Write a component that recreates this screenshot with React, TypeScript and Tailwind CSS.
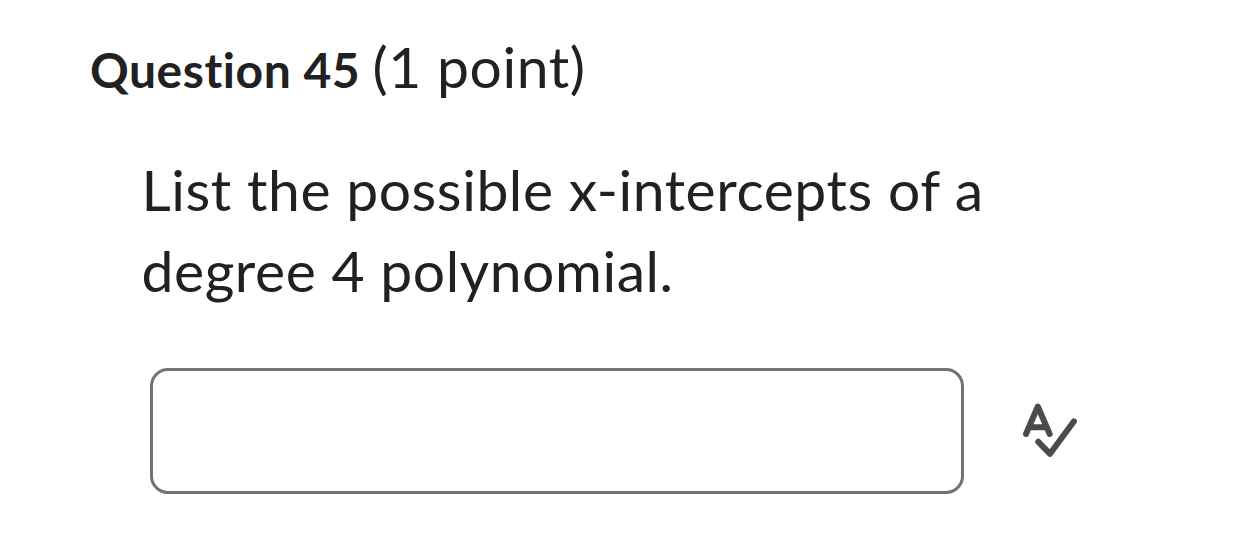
import { useState } from 'react'

function SpellCheckIcon() {
  return (
    <svg className="h-[56px] w-[56px] overflow-visible" viewBox="0 0 56 56" fill="none" stroke="#494c4e" strokeWidth={6} strokeLinecap="round" strokeLinejoin="round">
      <path d="M5 31L16.800 3.500L28.700 31M9 24.200H24.500" />
      <path d="M17.300 38.800L29 50.800L53 18.300" />
    </svg>
  )
}

export default function App() {
  const [answer, setAnswer] = useState('')

  return (
    <main className="h-[539px] overflow-hidden bg-white pt-[33px] font-['Lato',sans-serif] text-[#202122]">
      <h2 className="pl-[90px] text-[48px] leading-[66px] whitespace-nowrap">
        <span className="font-bold tracking-[0.54px]">Question 45 </span>
        <span className="text-[57px] tracking-[0.57px]">(1 point)</span>
      </h2>
      <div className="mt-[46px] pl-[141.500px]">
        <p className="text-[57px] leading-[81px] tracking-[0.57px] whitespace-nowrap">
          List the possible x-intercepts of a<br />
          degree 4 polynomial.
        </p>
      </div>
      <div className="mt-[57px] flex items-center pl-[150px]">
        <input
          className="h-[126px] w-[814px] rounded-[18px] border-[3px] border-[#6e7376] bg-white px-8 text-[48px] outline-none"
          aria-label="Answer"
          value={answer}
          onChange={e => setAnswer(e.target.value)}
        />
        <button className="ml-[57px]" aria-label="Check spelling">
          <SpellCheckIcon />
        </button>
      </div>
    </main>
  )
}
